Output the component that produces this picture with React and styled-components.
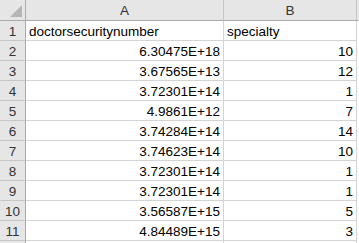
import React from 'react'
import styled, { createGlobalStyle } from 'styled-components'

const GlobalStyle = createGlobalStyle`
  html, body {
    margin: 0;
    padding: 0;
    background: #ffffff;
  }
  * {
    box-sizing: border-box;
  }
`

const Sheet = styled.div`
  display: grid;
  grid-template-columns: 26px 198px 133px 2px;
  grid-auto-rows: 20px;
  grid-template-rows: 21px;
  width: 359px;
  height: 243px;
  overflow: hidden;
  font-family: 'Liberation Sans', Arial, sans-serif;
  font-size: 13.5px;
  color: #000;
  background: #fff;
`

const Corner = styled.div`
  position: relative;
  background: #e6e6e6;
  border-right: 1px solid #ababab;
  border-bottom: 1px solid #ababab;

  &::after {
    content: '';
    position: absolute;
    right: 3px;
    bottom: 3px;
    width: 0;
    height: 0;
    border-left: 12px solid transparent;
    border-bottom: 12px solid #b5b5b5;
  }
`

const ColHeader = styled.div`
  display: flex;
  align-items: center;
  justify-content: center;
  background: #e6e6e6;
  color: #333;
  border-right: 1px solid ${({ $last }) => ($last ? '#e6e6e6' : '#c6c6c6')};
  border-bottom: 1px solid #ababab;
  padding-top: 1px;
`

const RowHeader = styled.div`
  display: flex;
  align-items: center;
  justify-content: center;
  background: #e6e6e6;
  color: #333;
  border-right: 1px solid #ababab;
  border-bottom: 1px solid #c6c6c6;
  padding-top: 1px;
`

const Cell = styled.div`
  display: flex;
  align-items: center;
  justify-content: ${({ $num }) => ($num ? 'flex-end' : 'flex-start')};
  padding: 1px 3px 0 3px;
  white-space: nowrap;
  overflow: hidden;
  border-right: 1px solid #d4d4d4;
  border-bottom: 1px solid #d4d4d4;
`

const Filler = styled.div`
  background: #fff;
`

const rows = [
  ['6.30475E+18', '10'],
  ['3.67565E+13', '12'],
  ['3.72301E+14', '1'],
  ['4.9861E+12', '7'],
  ['3.74284E+14', '14'],
  ['3.74623E+14', '10'],
  ['3.72301E+14', '1'],
  ['3.72301E+14', '1'],
  ['3.56587E+15', '5'],
  ['4.84489E+15', '3'],
]

const App = () => {
  return (
    <>
      <GlobalStyle />
      <Sheet>
        <Corner />
        <ColHeader>A</ColHeader>
        <ColHeader>B</ColHeader>
        <ColHeader $last />

        <RowHeader>1</RowHeader>
        <Cell>doctorsecuritynumber</Cell>
        <Cell>specialty</Cell>
        <Filler />

        {rows.map(([num, spec], i) => (
          <React.Fragment key={i}>
            <RowHeader>{i + 2}</RowHeader>
            <Cell $num>{num}</Cell>
            <Cell $num>{spec}</Cell>
            <Filler />
          </React.Fragment>
        ))}

        <RowHeader />
        <Cell />
        <Cell />
        <Filler />
      </Sheet>
    </>
  )
}

export default App
